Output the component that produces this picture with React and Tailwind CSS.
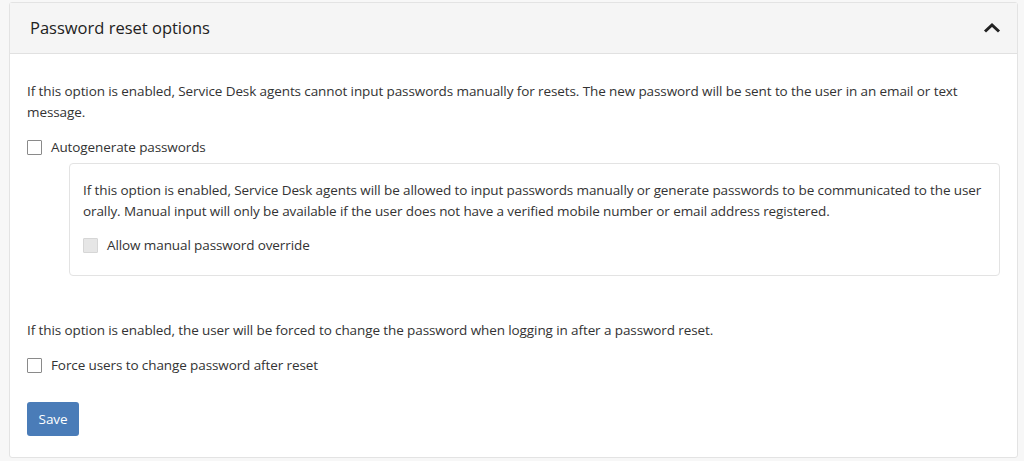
import React, { useState } from 'react';

const Checkbox = ({ checked, onChange, disabled }) => (
    <span
        onClick={() => !disabled && onChange(!checked)}
        className={`w-[15px] h-[15px] shrink-0 border rounded-[1px] ${disabled ? 'bg-[#e6e6e6] border-[#d6d6d6]' : 'bg-white border-[#8a8a8a]'}`}
    />
);

const App = () => {
    const [autoGen, setAutoGen] = useState(false);
    const [manual, setManual] = useState(false);
    const [force, setForce] = useState(false);

    return (
        <div className="min-h-[461px] bg-[#f7f7f7] pt-[2px] pl-[9px] pr-[6px] text-[#333] font-['Open_Sans',sans-serif]">
            <div className="bg-white border border-[#e3e3e3] rounded-[3px] h-[456px] flex flex-col">
                {/* Header */}
                <div className="h-[51px] bg-[#f5f5f5] border-b border-[#e1e1e1] flex items-center justify-between pl-[20px] pr-[16px]">
                    <h2 className="text-[16.5px] text-[#222]">Password reset options</h2>
                    <svg width="18" height="12" viewBox="0 0 18 12">
                        <path d="M2 9.5 L9 3 L16 9.5" fill="none" stroke="#222" strokeWidth="3" />
                    </svg>
                </div>

                {/* Body */}
                <div className="px-[17px] pt-[27px] text-[13.5px] leading-[21px] tracking-[-0.1px]">
                    <p>If this option is enabled, Service Desk agents cannot input passwords manually for resets. The new password will be sent to the user in an email or text message.</p>
                    <label className="flex items-center gap-[9px] mt-[14px]">
                        <Checkbox checked={autoGen} onChange={setAutoGen} />
                        <span>Autogenerate passwords</span>
                    </label>

                    <div className="ml-[42px] mt-[5px] border border-[#e3e3e3] rounded-[4px] px-[13px] pt-[16px] pb-[19px]">
                        <p>If this option is enabled, Service Desk agents will be allowed to input passwords manually or generate passwords to be communicated to the user orally. Manual input will only be available if the user does not have a verified mobile number or email address registered.</p>
                        <label className="flex items-center gap-[9px] mt-[13px]">
                            <Checkbox checked={manual} onChange={setManual} disabled />
                            <span>Allow manual password override</span>
                        </label>
                    </div>

                    <p className="mt-[44px]">If this option is enabled, the user will be forced to change the password when logging in after a password reset.</p>
                    <label className="flex items-center gap-[9px] mt-[14px]">
                        <Checkbox checked={force} onChange={setForce} />
                        <span>Force users to change password after reset</span>
                    </label>

                    <button className="mt-[26px] bg-[#4a7cb8] text-white rounded-[3px] w-[52px] h-[34px] text-[13.5px]">Save</button>
                </div>
            </div>
        </div>
    );
};

export default App;
